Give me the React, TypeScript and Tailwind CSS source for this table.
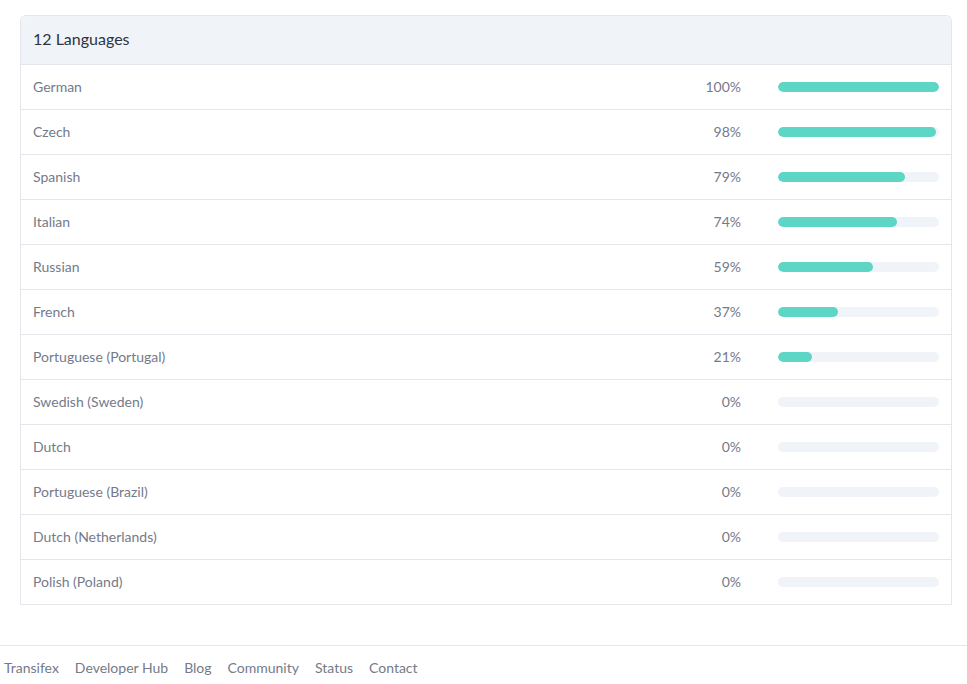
const languages: { name: string; pct: number }[] = [
  { name: 'German', pct: 100 },
  { name: 'Czech', pct: 98 },
  { name: 'Spanish', pct: 79 },
  { name: 'Italian', pct: 74 },
  { name: 'Russian', pct: 59 },
  { name: 'French', pct: 37 },
  { name: 'Portuguese (Portugal)', pct: 21 },
  { name: 'Swedish (Sweden)', pct: 0 },
  { name: 'Dutch', pct: 0 },
  { name: 'Portuguese (Brazil)', pct: 0 },
  { name: 'Dutch (Netherlands)', pct: 0 },
  { name: 'Polish (Poland)', pct: 0 },
];

const links = ['Transifex', 'Developer Hub', 'Blog', 'Community', 'Status', 'Contact'];

export default function App() {
  return (
    <div className="min-h-[684px] bg-white font-['Lato','Open_Sans',sans-serif] text-[#757a8a]">
      <div className="pt-[15px] pl-[20px]">
        <div className="w-[932px] rounded-t-[6px] border-x border-t border-[#e3e6ea]">
          <div className="flex h-[49px] items-center rounded-t-[6px] border-b border-[#e3e6ea] bg-[#f0f3f8] px-3 text-[16px] text-[#2f3340]">
            <span className="mb-[2px]">12 Languages</span>
          </div>
          {languages.map((l) => (
            <div key={l.name} className="flex h-[45px] items-center border-b border-[#e3e6ea] px-3 text-[14px]">
              <div className="mb-[2px] flex-1">{l.name}</div>
              <div className="mb-[2px] w-[60px] text-right">{l.pct}%</div>
              <div className="ml-[37px] h-[10px] w-[161px] overflow-hidden rounded-full bg-[#f0f3f8]">
                <div className="h-full rounded-full bg-[#5dd6c5]" style={{ width: `${l.pct}%` }} />
              </div>
            </div>
          ))}
        </div>
      </div>
      <div className="mt-[40px] border-t border-[#e3e6ea] pt-[11px]">
        <div className="flex gap-[16px] pl-[4px] text-[14px]">
          {links.map((t) => (
            <span key={t}>{t}</span>
          ))}
        </div>
      </div>
    </div>
  );
}
